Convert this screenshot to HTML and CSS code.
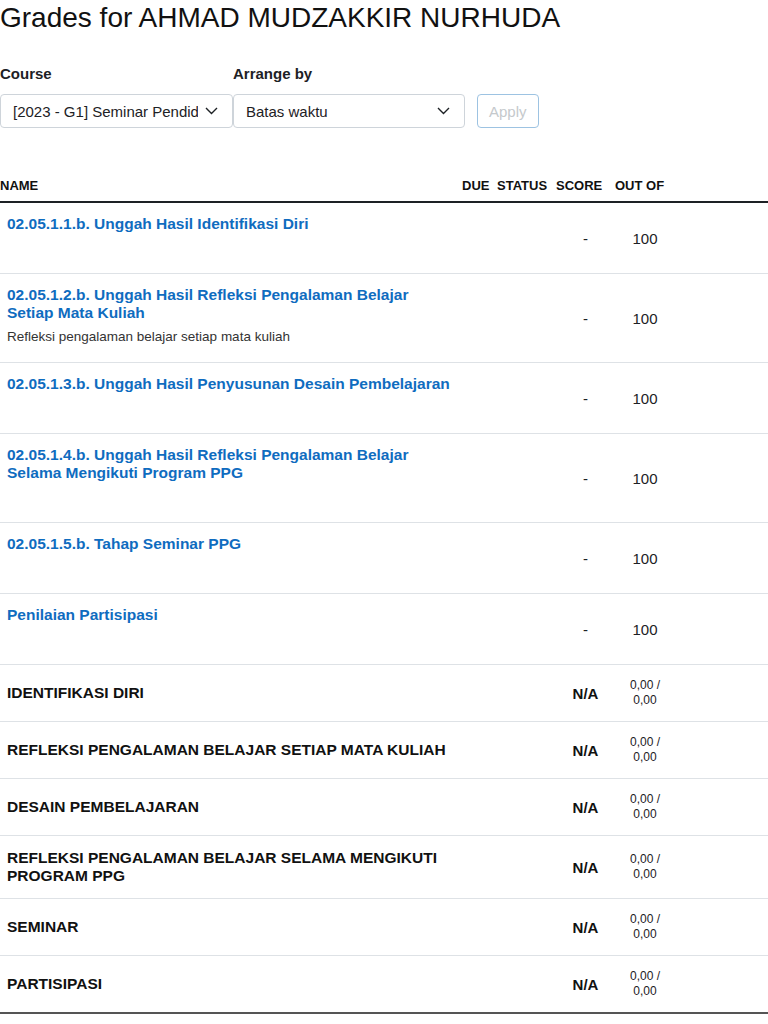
FILE: index.html
```html
<!doctype html>
<html lang="en">
	<head>
		<meta charset="UTF-8" />
		<meta name="viewport" content="width=device-width, initial-scale=1.0" />
		<title>Grades</title>
		<link rel="stylesheet" href="styles.css">
	</head>

	<body>
		<h1 class="page-title">Grades for AHMAD MUDZAKKIR NURHUDA</h1>

		<form class="filters">
			<div class="field">
				<label class="field-label">Course</label>
				<div class="select select-course">
					<span class="select-text">[2023 - G1] Seminar Pendidikan Profesi Guru</span>
					<svg class="chevron" width="13" height="8" viewBox="0 0 13 8"><path d="M1 1l5.5 5.5L12 1" fill="none" stroke="#1d2125" stroke-width="1.4"/></svg>
				</div>
			</div>
			<div class="field">
				<label class="field-label">Arrange by</label>
				<div class="select select-sort">
					<span class="select-text">Batas waktu</span>
					<svg class="chevron" width="13" height="8" viewBox="0 0 13 8"><path d="M1 1l5.5 5.5L12 1" fill="none" stroke="#1d2125" stroke-width="1.4"/></svg>
				</div>
			</div>
			<button type="button" class="btn-apply" disabled>Apply</button>
		</form>

		<table class="grades">
			<thead>
				<tr>
					<th class="col-name">Name</th>
					<th class="col-due">Due</th>
					<th class="col-status">Status</th>
					<th class="col-score">Score</th>
					<th class="col-out">Out of</th>
					<th class="col-rest"></th>
				</tr>
			</thead>
			<tbody>
				<tr class="item">
					<td class="name"><a href="#">02.05.1.1.b. Unggah Hasil Identifikasi Diri</a><div class="desc"></div></td>
					<td></td><td></td>
					<td class="num">-</td>
					<td class="num">100</td>
					<td></td>
				</tr>
				<tr class="item">
					<td class="name"><a href="#">02.05.1.2.b. Unggah Hasil Refleksi Pengalaman Belajar<br>Setiap Mata Kuliah</a><div class="desc">Refleksi pengalaman belajar setiap mata kuliah</div></td>
					<td></td><td></td>
					<td class="num">-</td>
					<td class="num">100</td>
					<td></td>
				</tr>
				<tr class="item">
					<td class="name"><a href="#">02.05.1.3.b. Unggah Hasil Penyusunan Desain Pembelajaran</a><div class="desc"></div></td>
					<td></td><td></td>
					<td class="num">-</td>
					<td class="num">100</td>
					<td></td>
				</tr>
				<tr class="item">
					<td class="name"><a href="#">02.05.1.4.b. Unggah Hasil Refleksi Pengalaman Belajar<br>Selama Mengikuti Program PPG</a><div class="desc"></div></td>
					<td></td><td></td>
					<td class="num">-</td>
					<td class="num">100</td>
					<td></td>
				</tr>
				<tr class="item">
					<td class="name"><a href="#">02.05.1.5.b. Tahap Seminar PPG</a><div class="desc"></div></td>
					<td></td><td></td>
					<td class="num">-</td>
					<td class="num">100</td>
					<td></td>
				</tr>
				<tr class="item">
					<td class="name"><a href="#">Penilaian Partisipasi</a><div class="desc"></div></td>
					<td></td><td></td>
					<td class="num">-</td>
					<td class="num">100</td>
					<td></td>
				</tr>

				<tr class="category">
					<td class="cat-name">IDENTIFIKASI DIRI</td>
					<td></td><td></td>
					<td class="na">N/A</td>
					<td class="total">0,00 /<br>0,00</td>
					<td></td>
				</tr>
				<tr class="category">
					<td class="cat-name">REFLEKSI PENGALAMAN BELAJAR SETIAP MATA KULIAH</td>
					<td></td><td></td>
					<td class="na">N/A</td>
					<td class="total">0,00 /<br>0,00</td>
					<td></td>
				</tr>
				<tr class="category">
					<td class="cat-name">DESAIN PEMBELAJARAN</td>
					<td></td><td></td>
					<td class="na">N/A</td>
					<td class="total">0,00 /<br>0,00</td>
					<td></td>
				</tr>
				<tr class="category">
					<td class="cat-name">REFLEKSI PENGALAMAN BELAJAR SELAMA MENGIKUTI<br>PROGRAM PPG</td>
					<td></td><td></td>
					<td class="na">N/A</td>
					<td class="total">0,00 /<br>0,00</td>
					<td></td>
				</tr>
				<tr class="category">
					<td class="cat-name">SEMINAR</td>
					<td></td><td></td>
					<td class="na">N/A</td>
					<td class="total">0,00 /<br>0,00</td>
					<td></td>
				</tr>
				<tr class="category">
					<td class="cat-name">PARTISIPASI</td>
					<td></td><td></td>
					<td class="na">N/A</td>
					<td class="total">0,00 /<br>0,00</td>
					<td></td>
				</tr>
			</tbody>
		</table>
	</body>
</html>
```

FILE: styles.css
```css
body {
	font-family: "Liberation Sans", Arial, sans-serif;
	margin: 0;
	color: #1d2125;
	background: #fff;
}

.page-title {
	margin: 0;
	font-size: 28px;
	font-weight: normal;
	line-height: 36px;
	color: #111;
}

/* Course / sort pickers */
.filters {
	display: flex;
	align-items: flex-end;
	margin-top: 28px;
}

.field {
	display: flex;
	flex-direction: column;
}

.field-label {
	font-size: 15px;
	font-weight: bold;
	line-height: 20px;
	margin-bottom: 10px;
	color: #1d2125;
}

.select {
	display: flex;
	align-items: center;
	box-sizing: border-box;
	height: 34px;
	border: 1px solid #ced4da;
	border-radius: 4px;
	padding: 0 14px 0 12px;
	font-size: 15px;
	color: #1d2125;
}

.select-course {
	width: 233px;
}

.select-text {
	flex: 1;
	white-space: nowrap;
}

.select-course .select-text {
	flex: 0 0 185px;
	overflow: hidden;
}

.select-sort {
	width: 232px;
}

.chevron {
	margin-left: auto;
	flex-shrink: 0;
}

.btn-apply {
	height: 34px;
	margin-left: 12px;
	padding: 0 11px;
	border: 1px solid #9dc3e2;
	border-radius: 4px;
	background: #fff;
	color: #c5c9cc;
	font-family: "Liberation Sans", Arial, sans-serif;
	font-size: 15px;
}

/* Grades table */
.grades {
	width: 768px;
	margin-top: 40px;
	border-collapse: collapse;
	border-bottom: 2px solid #555;
}

.grades th {
	padding: 9px 0 7px;
	font-size: 13px;
	font-weight: bold;
	text-transform: uppercase;
	text-align: left;
	line-height: 17px;
	color: #111;
	border-bottom: 2px solid #1d2125;
}

.col-due { width: 35px; }
.col-status { width: 59px; }
.col-score { width: 59px; }
.col-out { width: 60px; }
.col-rest { width: 93px; }

.grades td {
	border-top: 1px solid #dee2e6;
	vertical-align: middle;
	padding: 0;
}

.grades tbody tr:first-child td {
	border-top: none;
}

.item .name {
	padding: 12px 7px 12px;
	vertical-align: top;
}

.item .name a {
	display: block;
	font-size: 15.5px;
	font-weight: bold;
	line-height: 18px;
	color: #0f6cbf;
	text-decoration: none;
}

.desc {
	box-sizing: border-box;
	min-height: 28px;
	padding-top: 6px;
	font-size: 13.5px;
	line-height: 18px;
	color: #333;
}

.num {
	text-align: center;
	font-size: 15px;
	color: #1d2125;
}

.category td {
	padding-top: 13px;
	padding-bottom: 13px;
}

.cat-name {
	padding-left: 7px !important;
	font-size: 15.5px;
	font-weight: bold;
	line-height: 18px;
	color: #111;
}

.na {
	text-align: center;
	font-size: 15px;
	font-weight: bold;
	color: #111;
}

.total {
	text-align: center;
	font-size: 12px;
	line-height: 15px;
	color: #1d2125;
}
```
